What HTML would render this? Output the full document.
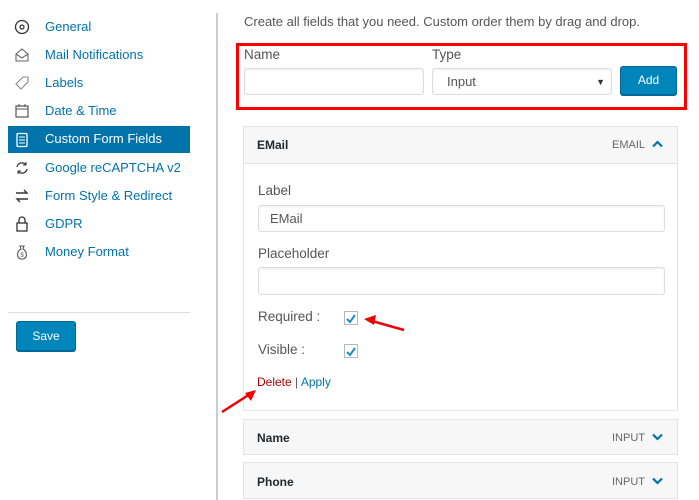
<!DOCTYPE html>
<html><head><style>
body{margin:0;width:699px;height:500px;background:#fff;font-family:"Liberation Sans",sans-serif;position:relative;overflow:hidden;color:#444}
.a{position:absolute}
.nav{position:absolute;left:45px;font-size:13px;color:#0073aa}
.ic{position:absolute;left:14px;width:16px;height:16px}
.inp{position:absolute;border:1px solid #ddd;border-radius:3px;background:#fff;box-shadow:inset 0 1px 2px rgba(0,0,0,.07);font-size:13px;color:#555;box-sizing:border-box;padding-left:11px;line-height:26px}
.lbl{position:absolute;font-size:13.5px;color:#555}
.btn{position:absolute;background:#0085ba;border:1px solid #006799;border-radius:3px;color:#fff;font-size:12px;text-align:center;box-sizing:border-box;box-shadow:0 1px 0 #006799}
.panel{position:absolute;left:243px;width:435px;border:1px solid #e2e4e7;background:#f7f7f7;box-sizing:border-box}
.ph{position:absolute;left:13px;font-size:12px;font-weight:bold;color:#23282d}
.pt{position:absolute;right:32px;font-size:11px;color:#666}
.cb{position:absolute;left:344px;width:14px;height:14px;border:1px solid #b4b9be;background:#fff;box-sizing:border-box}
</style></head><body>
<div class="a" style="left:8px;top:126px;width:182px;height:27px;background:#0073aa"></div>
<div class="nav" style="top:19px">General</div>
<div class="nav" style="top:47px">Mail Notifications</div>
<div class="nav" style="top:75px">Labels</div>
<div class="nav" style="top:103px">Date &amp; Time</div>
<div class="nav" style="top:131px;color:#fff">Custom Form Fields</div>
<div class="nav" style="top:160px">Google reCAPTCHA v2</div>
<div class="nav" style="top:188px">Form Style &amp; Redirect</div>
<div class="nav" style="top:216px">GDPR</div>
<div class="nav" style="top:244px">Money Format</div>
<svg class="ic" style="top:19px" viewBox="0 0 16 16"><circle cx="8" cy="8" r="6.5" fill="none" stroke="#333" stroke-width="1.3"/><circle cx="8" cy="8" r="2" fill="none" stroke="#333" stroke-width="1.2"/></svg>
<svg class="ic" style="top:47px" viewBox="0 0 16 16"><path d="M2 7L8 2l6 5v7H2z M2 7l6 4 6-4" fill="none" stroke="#666" stroke-width="1.1"/></svg>
<svg class="ic" style="top:75px" viewBox="0 0 16 16"><path d="M2 9l7-7h5v5l-7 7z" fill="none" stroke="#888" stroke-width="1.1"/></svg>
<svg class="ic" style="top:103px" viewBox="0 0 16 16"><rect x="2" y="3" width="12" height="11" fill="none" stroke="#555" stroke-width="1.2"/><path d="M2 6h12M5 1v3M11 1v3" stroke="#555"/></svg>
<svg class="ic" style="top:132px" viewBox="0 0 16 16"><rect x="3" y="1.5" width="10" height="13" rx="1" fill="none" stroke="#fff" stroke-width="1.3"/><path d="M5 5h6M5 8h6M5 11h6" stroke="#fff"/></svg>
<svg class="ic" style="top:160px" viewBox="0 0 16 16"><path d="M3 7a5 5 0 0 1 9-2M13 9a5 5 0 0 1-9 2" fill="none" stroke="#333" stroke-width="1.3"/><path d="M12 2v3h-3M4 14v-3h3" fill="none" stroke="#333"/></svg>
<svg class="ic" style="top:188px" viewBox="0 0 16 16"><path d="M2 5h11l-3-3M14 11H3l3 3" fill="none" stroke="#333" stroke-width="1.4"/></svg>
<svg class="ic" style="top:216px" viewBox="0 0 16 16"><rect x="3" y="7" width="10" height="8" fill="none" stroke="#333" stroke-width="1.3"/><path d="M5 7V4a3 3 0 0 1 6 0v3" fill="none" stroke="#333" stroke-width="1.3"/></svg>
<svg class="ic" style="top:244px" viewBox="0 0 16 16"><path d="M6 2h4l-1 3c4 2 5 9 0 10H7c-5-1-4-8 0-10z" fill="none" stroke="#555" stroke-width="1.1"/><text x="8" y="13" font-size="6" text-anchor="middle" fill="#555">$</text></svg>
<div class="a" style="left:8px;top:312px;width:182px;height:1px;background:#ddd"></div>
<div class="btn" style="left:16px;top:321px;width:60px;height:30px;line-height:28px">Save</div>
<div class="a" style="left:216px;top:13px;width:2px;height:487px;background:#ccc"></div>

<div class="a" style="left:244px;top:14px;font-size:13px;color:#555">Create all fields that you need. Custom order them by drag and drop.</div>
<div class="a" style="left:236px;top:43px;width:451px;height:67px;border:3px solid #f00;box-sizing:border-box"></div>
<div class="lbl" style="left:244px;top:47px">Name</div>
<div class="lbl" style="left:432px;top:47px">Type</div>
<div class="inp" style="left:244px;top:68px;width:180px;height:27px"></div>
<div class="inp" style="left:432px;top:68px;width:180px;height:27px;padding-left:14px">Input<span style="position:absolute;right:6px;font-size:9px;color:#333">▼</span></div>
<div class="btn" style="left:620px;top:66px;width:57px;height:29px;line-height:27px">Add</div>

<div class="panel" style="top:126px;height:285px">
 <div class="a" style="left:0;top:36px;width:433px;height:246px;background:#fff;border-top:1px solid #e2e4e7"></div>
 <div class="ph" style="top:11px">EMail</div><div class="pt" style="top:12px">EMAIL</div>
 <svg class="a" style="right:14px;top:13px" width="11" height="8" viewBox="0 0 11 8"><path d="M1 6.5l4.5-4.5 4.5 4.5" fill="none" stroke="#0073aa" stroke-width="2.2"/></svg>
</div>
<div class="lbl" style="left:258px;top:183px">Label</div>
<div class="inp" style="left:258px;top:205px;width:407px;height:27px">EMail</div>
<div class="lbl" style="left:258px;top:246px">Placeholder</div>
<div class="inp" style="left:258px;top:267px;width:407px;height:28px"></div>
<div class="lbl" style="left:258px;top:309px">Required :</div>
<div class="lbl" style="left:258px;top:342px">Visible :</div>
<div class="cb" style="top:311px"><svg width="12" height="12" viewBox="0 0 12 12"><path d="M2 6l3 3 5-7" fill="none" stroke="#1e8cbe" stroke-width="2"/></svg></div>
<div class="cb" style="top:344px"><svg width="12" height="12" viewBox="0 0 12 12"><path d="M2 6l3 3 5-7" fill="none" stroke="#1e8cbe" stroke-width="2"/></svg></div>
<div class="a" style="left:257px;top:375px;font-size:12px"><span style="color:#a00">Delete</span> <span style="color:#555">|</span> <span style="color:#0073aa">Apply</span></div>

<div class="panel" style="top:419px;height:36px"><div class="ph" style="top:11px">Name</div><div class="pt" style="top:12px">INPUT</div>
<svg class="a" style="right:14px;top:13px" width="11" height="8" viewBox="0 0 11 8"><path d="M1 1.5l4.5 4.5 4.5-4.5" fill="none" stroke="#0073aa" stroke-width="2.2"/></svg></div>
<div class="panel" style="top:462px;height:37px"><div class="ph" style="top:12px">Phone</div><div class="pt" style="top:13px">INPUT</div>
<svg class="a" style="right:14px;top:14px" width="11" height="8" viewBox="0 0 11 8"><path d="M1 1.5l4.5 4.5 4.5-4.5" fill="none" stroke="#0073aa" stroke-width="2.2"/></svg></div>

<svg class="a" style="left:0;top:0" width="699" height="500">
<path d="M404 330L372 321" stroke="#e00" stroke-width="2.5"/><path d="M364 319l12-4-2 10z" fill="#e00"/>
<path d="M222 412L250 394" stroke="#e00" stroke-width="2.5"/><path d="M256 390l-5 11-6-8z" fill="#e00"/>
</svg>
</body></html>
